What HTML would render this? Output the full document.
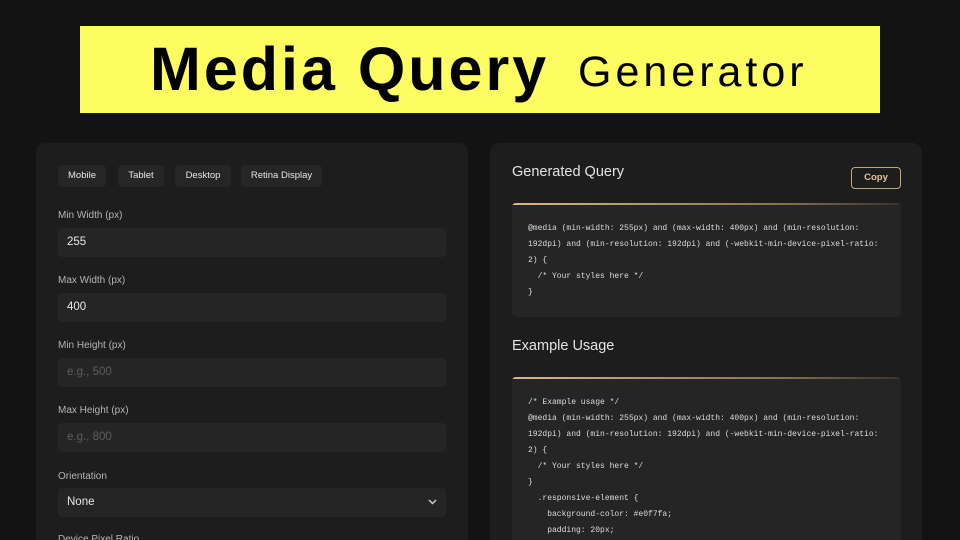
<!DOCTYPE html>
<html><head><meta charset="utf-8"><style>
*{margin:0;padding:0;box-sizing:border-box}
html,body{width:960px;height:540px;overflow:hidden}
body{background:#131313;font-family:"Liberation Sans",sans-serif;position:relative}
.banner{position:absolute;left:80px;top:26px;width:800px;height:87px;background:#fdfd62;color:#000;white-space:nowrap}
.banner .b{font-weight:bold;font-size:61px;position:absolute;left:70px;top:8px;letter-spacing:3px}
.banner .g{font-size:43px;position:absolute;left:498px;top:22px;letter-spacing:4px}
.panel{position:absolute;top:143px;height:420px;background:#1d1d1d;border-radius:9px}
.btn{position:absolute;top:165px;height:22px;background:#262626;border-radius:4px;color:#e6e6e6;font-size:9.5px;line-height:22px;text-align:center}
.lbl{position:absolute;left:58px;color:#b5b5b5;font-size:10px}
.inp{position:absolute;left:58px;width:388px;height:29px;background:#252525;border-radius:4px;color:#e8e8e8;font-size:11.5px;line-height:29px;padding-left:9px}
.ph{color:#5e5e5e}
h3{position:absolute;left:512px;color:#e4e4e4;font-size:14.5px;font-weight:normal}
.code{position:absolute;left:512px;width:389px;background:#252525;border-radius:4px;font-family:"Liberation Mono",monospace;font-size:8px;line-height:16px;color:#dcdcdc;padding:18px 16px;white-space:pre;overflow:hidden}
.code:before{content:"";position:absolute;left:0;top:0;right:0;height:2px;background:linear-gradient(90deg,#d9b88c,#8a6f4d 70%,#3a3328)}
.copy{position:absolute;left:851px;top:167px;width:50px;height:22px;border:1px solid #c7a47a;border-radius:4px;color:#e3c49e;font-size:9.5px;font-weight:bold;line-height:20px;text-align:center}
</style></head><body>
<div class="banner"><span class="b">Media Query</span><span class="g">Generator</span></div>
<div class="panel" style="left:36px;width:432px"></div>
<div class="panel" style="left:490px;width:432px"></div>
<div class="btn" style="left:58px;width:48px">Mobile</div>
<div class="btn" style="left:118px;width:46px">Tablet</div>
<div class="btn" style="left:175px;width:56px">Desktop</div>
<div class="btn" style="left:241px;width:81px">Retina Display</div>
<div class="lbl" style="top:210px">Min Width (px)</div>
<div class="inp" style="top:228px">255</div>
<div class="lbl" style="top:275px">Max Width (px)</div>
<div class="inp" style="top:293px">400</div>
<div class="lbl" style="top:340px">Min Height (px)</div>
<div class="inp ph" style="top:358px">e.g., 500</div>
<div class="lbl" style="top:405px">Max Height (px)</div>
<div class="inp ph" style="top:423px">e.g., 800</div>
<div class="lbl" style="top:471px">Orientation</div>
<div class="inp" style="top:488px">None<svg style="position:absolute;right:9px;top:11px" width="9" height="6" viewBox="0 0 9 6"><path d="M1 1l3.5 3.5L8 1" stroke="#ccc" stroke-width="1.5" fill="none"/></svg></div>
<div class="lbl" style="top:534px">Device Pixel Ratio</div>
<h3 style="top:164px">Generated Query</h3>
<div class="copy">Copy</div>
<div class="code" style="top:203px;height:114px">@media (min-width: 255px) and (max-width: 400px) and (min-resolution:
192dpi) and (min-resolution: 192dpi) and (-webkit-min-device-pixel-ratio:
2) {
  /* Your styles here */
}</div>
<h3 style="top:338px">Example Usage</h3>
<div class="code" style="top:377px;height:170px">/* Example usage */
@media (min-width: 255px) and (max-width: 400px) and (min-resolution:
192dpi) and (min-resolution: 192dpi) and (-webkit-min-device-pixel-ratio:
2) {
  /* Your styles here */
}
  .responsive-element {
    background-color: #e0f7fa;
    padding: 20px;</div>
</body></html>
